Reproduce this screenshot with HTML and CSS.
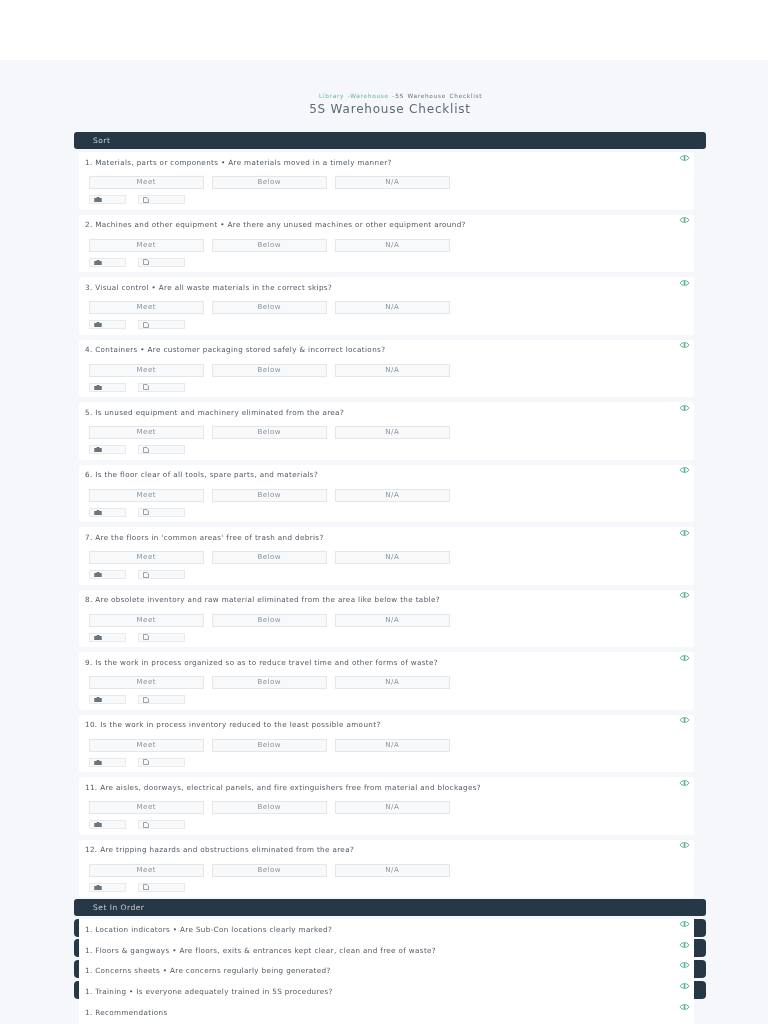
FILE: index.html
```html
<!DOCTYPE html>
<html lang="en">
  <head>
    <meta charset="UTF-8" />
    <meta name="viewport" content="width=device-width, initial-scale=1.0" />
    <title>5S Warehouse Checklist</title>
    <link rel="stylesheet" href="styles.css">
  </head>
  <body>
    <header class="topbar"></header>

    <main class="page">
      <nav class="crumbs"><span class="crumb-link">Library</span> <span class="crumb-link">-Warehouse</span> <span>-5S Warehouse Checklist</span></nav>
      <h1 class="title">5S Warehouse Checklist</h1>

      <h2 class="band">Sort</h2>

      <svg class="sprites" width="0" height="0">
        <symbol id="eye" viewBox="0 0 12 7">
          <path d="M.7 3.5C2 1.500 4 .7 6 .7s4 .8 5.300 2.800C10 5.500 8 6.300 6 6.300S2 5.500.7 3.500Z" fill="none" stroke="currentColor" stroke-width="1.100" />
          <rect x="5" y=".7" width="2" height="5.600" fill="currentColor" />
        </symbol>
        <symbol id="camera" viewBox="0 0 9 6">
          <path d="M0 1.200h2.500L3.200 0h2.600l.7 1.200H9V6H0Z" fill="currentColor" />
        </symbol>
        <symbol id="file" viewBox="0 0 7 7">
          <path d="M.6.600h4l1.800 1.800v4H.6Z" fill="none" stroke="currentColor" />
        </symbol>
      </svg>

      <article class="card">
        <div class="card-top"><svg class="eye"><use href="#eye" /></svg></div>
        <p class="question">1. Materials, parts or components • Are materials moved in a timely manner?</p>
        <div class="answers"><span class="answer">Meet</span><span class="answer">Below</span><span class="answer">N/A</span></div>
        <div class="tools"><span class="tool tool-photo"><svg class="camera"><use href="#camera" /></svg></span><span class="tool tool-file"><svg class="file"><use href="#file" /></svg></span></div>
      </article>
      <article class="card">
        <div class="card-top"><svg class="eye"><use href="#eye" /></svg></div>
        <p class="question">2. Machines and other equipment • Are there any unused machines or other equipment around?</p>
        <div class="answers"><span class="answer">Meet</span><span class="answer">Below</span><span class="answer">N/A</span></div>
        <div class="tools"><span class="tool tool-photo"><svg class="camera"><use href="#camera" /></svg></span><span class="tool tool-file"><svg class="file"><use href="#file" /></svg></span></div>
      </article>
      <article class="card">
        <div class="card-top"><svg class="eye"><use href="#eye" /></svg></div>
        <p class="question">3. Visual control • Are all waste materials in the correct skips?</p>
        <div class="answers"><span class="answer">Meet</span><span class="answer">Below</span><span class="answer">N/A</span></div>
        <div class="tools"><span class="tool tool-photo"><svg class="camera"><use href="#camera" /></svg></span><span class="tool tool-file"><svg class="file"><use href="#file" /></svg></span></div>
      </article>
      <article class="card">
        <div class="card-top"><svg class="eye"><use href="#eye" /></svg></div>
        <p class="question">4. Containers • Are customer packaging stored safely &amp; incorrect locations?</p>
        <div class="answers"><span class="answer">Meet</span><span class="answer">Below</span><span class="answer">N/A</span></div>
        <div class="tools"><span class="tool tool-photo"><svg class="camera"><use href="#camera" /></svg></span><span class="tool tool-file"><svg class="file"><use href="#file" /></svg></span></div>
      </article>
      <article class="card">
        <div class="card-top"><svg class="eye"><use href="#eye" /></svg></div>
        <p class="question">5. Is unused equipment and machinery eliminated from the area?</p>
        <div class="answers"><span class="answer">Meet</span><span class="answer">Below</span><span class="answer">N/A</span></div>
        <div class="tools"><span class="tool tool-photo"><svg class="camera"><use href="#camera" /></svg></span><span class="tool tool-file"><svg class="file"><use href="#file" /></svg></span></div>
      </article>
      <article class="card">
        <div class="card-top"><svg class="eye"><use href="#eye" /></svg></div>
        <p class="question">6. Is the floor clear of all tools, spare parts, and materials?</p>
        <div class="answers"><span class="answer">Meet</span><span class="answer">Below</span><span class="answer">N/A</span></div>
        <div class="tools"><span class="tool tool-photo"><svg class="camera"><use href="#camera" /></svg></span><span class="tool tool-file"><svg class="file"><use href="#file" /></svg></span></div>
      </article>
      <article class="card">
        <div class="card-top"><svg class="eye"><use href="#eye" /></svg></div>
        <p class="question">7. Are the floors in 'common areas' free of trash and debris?</p>
        <div class="answers"><span class="answer">Meet</span><span class="answer">Below</span><span class="answer">N/A</span></div>
        <div class="tools"><span class="tool tool-photo"><svg class="camera"><use href="#camera" /></svg></span><span class="tool tool-file"><svg class="file"><use href="#file" /></svg></span></div>
      </article>
      <article class="card">
        <div class="card-top"><svg class="eye"><use href="#eye" /></svg></div>
        <p class="question">8. Are obsolete inventory and raw material eliminated from the area like below the table?</p>
        <div class="answers"><span class="answer">Meet</span><span class="answer">Below</span><span class="answer">N/A</span></div>
        <div class="tools"><span class="tool tool-photo"><svg class="camera"><use href="#camera" /></svg></span><span class="tool tool-file"><svg class="file"><use href="#file" /></svg></span></div>
      </article>
      <article class="card">
        <div class="card-top"><svg class="eye"><use href="#eye" /></svg></div>
        <p class="question">9. Is the work in process organized so as to reduce travel time and other forms of waste?</p>
        <div class="answers"><span class="answer">Meet</span><span class="answer">Below</span><span class="answer">N/A</span></div>
        <div class="tools"><span class="tool tool-photo"><svg class="camera"><use href="#camera" /></svg></span><span class="tool tool-file"><svg class="file"><use href="#file" /></svg></span></div>
      </article>
      <article class="card">
        <div class="card-top"><svg class="eye"><use href="#eye" /></svg></div>
        <p class="question">10. Is the work in process inventory reduced to the least possible amount?</p>
        <div class="answers"><span class="answer">Meet</span><span class="answer">Below</span><span class="answer">N/A</span></div>
        <div class="tools"><span class="tool tool-photo"><svg class="camera"><use href="#camera" /></svg></span><span class="tool tool-file"><svg class="file"><use href="#file" /></svg></span></div>
      </article>
      <article class="card">
        <div class="card-top"><svg class="eye"><use href="#eye" /></svg></div>
        <p class="question">11. Are aisles, doorways, electrical panels, and fire extinguishers free from material and blockages?</p>
        <div class="answers"><span class="answer">Meet</span><span class="answer">Below</span><span class="answer">N/A</span></div>
        <div class="tools"><span class="tool tool-photo"><svg class="camera"><use href="#camera" /></svg></span><span class="tool tool-file"><svg class="file"><use href="#file" /></svg></span></div>
      </article>
      <article class="card">
        <div class="card-top"><svg class="eye"><use href="#eye" /></svg></div>
        <p class="question">12. Are tripping hazards and obstructions eliminated from the area?</p>
        <div class="answers"><span class="answer">Meet</span><span class="answer">Below</span><span class="answer">N/A</span></div>
        <div class="tools"><span class="tool tool-photo"><svg class="camera"><use href="#camera" /></svg></span><span class="tool tool-file"><svg class="file"><use href="#file" /></svg></span></div>
      </article>

      <h2 class="band band-order">Set In Order</h2>

      <section class="fold-list">
        <div class="fold">
          <div class="fold-body">
            <div class="card-top"><svg class="eye"><use href="#eye" /></svg></div>
            <p class="question">1. Location indicators • Are Sub-Con locations clearly marked?</p>
          </div>
        </div>
        <div class="fold">
          <div class="fold-body">
            <div class="card-top"><svg class="eye"><use href="#eye" /></svg></div>
            <p class="question">1. Floors &amp; gangways • Are floors, exits &amp; entrances kept clear, clean and free of waste?</p>
          </div>
        </div>
        <div class="fold">
          <div class="fold-body">
            <div class="card-top"><svg class="eye"><use href="#eye" /></svg></div>
            <p class="question">1. Concerns sheets • Are concerns regularly being generated?</p>
          </div>
        </div>
        <div class="fold">
          <div class="fold-body">
            <div class="card-top"><svg class="eye"><use href="#eye" /></svg></div>
            <p class="question">1. Training • Is everyone adequately trained in 5S procedures?</p>
          </div>
        </div>
        <div class="fold fold-last">
          <div class="fold-body">
            <div class="card-top"><svg class="eye"><use href="#eye" /></svg></div>
            <p class="question">1. Recommendations</p>
          </div>
        </div>
      </section>
    </main>
  </body>
</html>
```

FILE: styles.css
```css
* {
  box-sizing: border-box;
}

html,
body {
  margin: 0;
  height: 1024px;
  overflow: hidden;
}

body {
  background-color: #ffffff;
  font-family: "DejaVu Sans", "Open Sans", sans-serif;
  color: #4a5560;
}

.topbar {
  height: 60px;
  background-color: #ffffff;
}

.page {
  height: 964px;
  padding: 33px 62px 0 74px;
  background-color: #f5f7fb;
  filter: blur(0.35px);
}

.sprites {
  display: block;
  height: 0;
}

/* breadcrumb + title */
.crumbs {
  margin-left: 245px;
  height: 7px;
  font-size: 5.800px;
  line-height: 7px;
  letter-spacing: 0.7px;
  word-spacing: 1px;
  white-space: nowrap;
  color: #67717c;
}

.crumb-link {
  color: #62b79a;
}

.title {
  margin: 1px 0 0;
  height: 17px;
  text-align: center;
  font-size: 12px;
  line-height: 17px;
  font-weight: 400;
  letter-spacing: 0.8px;
  color: #5e6a79;
}

.band {
  margin: 14px 0 3px;
  height: 17px;
  padding-left: 19px;
  border-radius: 3px;
  background-color: #263746;
  color: #c9d2d9;
  font-size: 7.500px;
  line-height: 17px;
  font-weight: 400;
  letter-spacing: 0.5px;
}

.band-order {
  margin-top: -3.500px;
}

.card {
  height: 57.500px;
  margin: 0 12px 5px 5px;
  padding: 2.500px 4px 0 6px;
  border-radius: 3px;
  background-color: #ffffff;
}

.card-top {
  display: flex;
  justify-content: flex-end;
  height: 4px;
}

.eye {
  flex: none;
  width: 11px;
  height: 6px;
  color: #5fb796;
}

.question {
  margin: 0;
  height: 8px;
  font-size: 7.200px;
  line-height: 8px;
  letter-spacing: 0.36px;
  white-space: nowrap;
  color: #4d5863;
}

/* Meet / Below / N/A */
.answers {
  display: flex;
  gap: 8.500px;
  margin: 9.500px 0 0 4px;
}

.answer {
  width: 114.500px;
  height: 13px;
  border: 1px solid #e4e6e8;
  background-color: #f8f9fa;
  text-align: center;
  font-size: 7px;
  line-height: 11px;
  letter-spacing: 0.5px;
  color: #8a929b;
}

.tools {
  display: flex;
  gap: 12px;
  margin: 6px 0 0 4px;
}

.tool {
  display: flex;
  align-items: center;
  height: 9px;
  padding-left: 4px;
  border: 1px solid #e8eaec;
  background-color: #f8f9fa;
}

.tool-photo {
  width: 37px;
}

.tool-file {
  width: 47px;
}

.camera {
  width: 8px;
  height: 5px;
  color: #6c747c;
}

.file {
  width: 6px;
  height: 6px;
  color: #8a929b;
}

/* collapsed rows, white column runs on behind the dark bars */
.fold-list {
  background: linear-gradient(#ffffff, #ffffff) no-repeat 5px 0 / 615px 100%;
  height: 106px;
}

.fold {
  height: 18px;
  margin-bottom: 2.700px;
  border-radius: 4px;
  background-color: #263746;
  overflow: hidden;
}

.fold-body {
  height: 18px;
  margin: 0 12px 0 5px;
  padding: 2.500px 4px 0 6px;
  background-color: #ffffff;
}

.fold-body .question {
  margin-top: 1px;
}

.fold-last {
  background-color: #ffffff;
  border-radius: 0;
  margin-left: 5px;
  margin-right: 12px;
}

.fold-last .fold-body {
  margin: 0;
}
```
